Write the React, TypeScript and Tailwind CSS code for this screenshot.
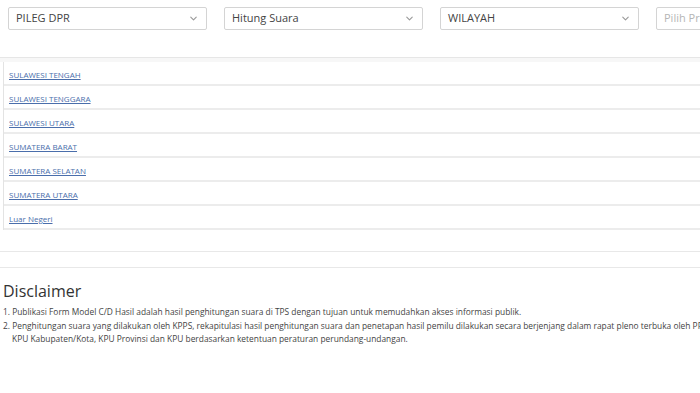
import { ChevronDown } from "lucide-react"

const provinces = [
  "SULAWESI TENGAH",
  "SULAWESI TENGGARA",
  "SULAWESI UTARA",
  "SUMATERA BARAT",
  "SUMATERA SELATAN",
  "SUMATERA UTARA",
  "Luar Negeri",
]

const SelectBox = ({ label, placeholder }: { label: string; placeholder?: boolean }) => {
  return (
    <div className="flex h-[23px] w-[199px] shrink-0 items-center justify-between rounded-[2px] border border-[#d4d4d4] bg-white pl-[7px] pr-[7px]">
      <span className={placeholder ? "text-[11px] text-[#b5b5b5]" : "text-[11px] text-[#444]"}>{label}</span>
      {!placeholder && <ChevronDown size={11} strokeWidth={2.4} color="#999" />}
    </div>
  )
}

export default function App() {
  return (
    <div className="h-[393px] w-[700px] overflow-hidden bg-white font-['Open_Sans',sans-serif]">
      <div className="flex h-[57px] gap-[17px] pl-[8px] pt-[7px]">
        <SelectBox label="PILEG DPR" />
        <SelectBox label="Hitung Suara" />
        <SelectBox label="WILAYAH" />
        <SelectBox label="Pilih Provinsi" placeholder />
      </div>
      <div className="h-[5px] border-t border-[#e6e6e6] bg-[#f7f7f7]" />
      <div className="ml-[3px] border-l border-[#e3e3e3]">
        {provinces.map((p) => (
          <div key={p} className="flex h-[24px] items-center border-b-2 border-[#ececec] pl-[5px] pt-[3px]">
            <a href="#" className="text-[8px] text-[#4a6eab] underline">{p}</a>
          </div>
        ))}
      </div>
      <div className="mt-[21px] h-[17px] border-y border-[#e8e8e8]" />
      <div className="px-[3px] pt-[13px] text-[#333]">
        <h2 className="text-[16px] leading-[20px]">Disclaimer</h2>
        <ol className="mt-[4px] text-[8.4px] leading-[13.5px] text-[#444]">
          <li>1. Publikasi Form Model C/D Hasil adalah hasil penghitungan suara di TPS dengan tujuan untuk memudahkan akses informasi publik.</li>
          <li className="whitespace-nowrap">2. Penghitungan suara yang dilakukan oleh KPPS, rekapitulasi hasil penghitungan suara dan penetapan hasil pemilu dilakukan secara berjenjang dalam rapat pleno terbuka oleh PPK, PPS,</li>
          <li className="pl-[9px]">KPU Kabupaten/Kota, KPU Provinsi dan KPU berdasarkan ketentuan peraturan perundang-undangan.</li>
        </ol>
      </div>
    </div>
  )
}
